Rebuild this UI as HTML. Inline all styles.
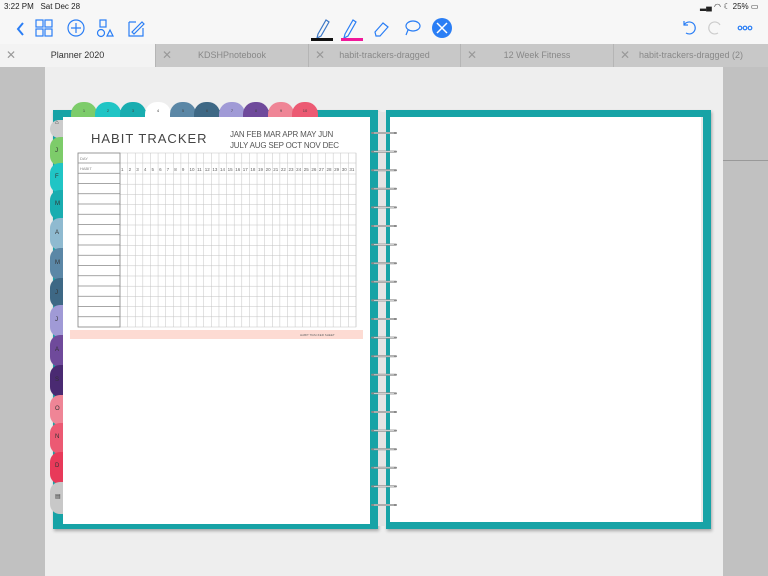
<!DOCTYPE html><html><head><style>
*{margin:0;padding:0;box-sizing:border-box}
body{width:768px;height:576px;overflow:hidden;background:#c1c1c1;font-family:"Liberation Sans",sans-serif;position:relative}
.a{position:absolute}
.tab{position:absolute;top:44px;height:23px;font-size:9px;color:#888;text-align:center;line-height:23px;border-left:1px solid #b5b5b5;background:#c8c8c8}
.tab span.x{position:absolute;left:6px;top:0;font-size:12px;color:#999}
.tt{position:absolute;top:102px;width:26px;height:20px;border-radius:12px 12px 0 0;font-size:4px;color:#444;text-align:center;padding-top:6px}
.st{position:absolute;left:50px;width:20px;border-radius:10px 0 0 10px;font-size:6px;color:#333;padding-left:5px}
</style></head><body>
<div class="a" style="left:0;top:0;width:768px;height:44px;background:#f7f7f7"></div>
<div class="a" style="left:4px;top:2px;font-size:8px;color:#222">3:22 PM&nbsp;&nbsp; Sat Dec 28</div>
<div class="a" style="left:700px;top:2px;font-size:8px;color:#222">▂▄ ◠ ☾ 25% ▭</div>
<svg class="a" style="left:0;top:12px" width="768" height="32" fill="none" stroke="#2a7ef5" stroke-width="1.2">
<path d="M23 11l-5 6 5 6" stroke-width="2"/>
<rect x="36" y="8" width="7" height="7"/><rect x="45" y="8" width="7" height="7"/><rect x="36" y="17" width="7" height="7"/><rect x="45" y="17" width="7" height="7"/>
<circle cx="76" cy="16" r="8"/><path d="M76 11v10M71 16h10"/>
<rect x="100" y="8" width="6" height="7"/><circle cx="101" cy="21" r="3.5"/><path d="M107 24l3-6 3 6z"/>
<path d="M129 10h7M129 10v14h14v-8M132 20l10-10 2 2-10 10z"/>
<path d="M318 22l8-14 3 2-8 14-4 2z" stroke="#3d78c6"/><rect x="311" y="26" width="22" height="3" fill="#111" stroke="none"/>
<path d="M345 22l8-14 3 2-8 14-4 2z"/><rect x="341" y="26" width="22" height="3" fill="#f0189a" stroke="none"/>
<path d="M375 20l8-9 5 4-8 9h-4z"/>
<ellipse cx="413" cy="14" rx="7" ry="5"/><path d="M408 18l-2 5"/>
<circle cx="442" cy="16" r="10" fill="#2a7ef5" stroke="none"/><path d="M437 11l10 10M447 11l-10 10" stroke="#fff" stroke-width="1.5"/>
<path d="M684 13a6 6 0 1 1 2 8M684 9v4h4"/>
<path d="M720 13a6 6 0 1 0 -2 8" stroke="#ccc"/>
<circle cx="740" cy="16" r="1.8"/><circle cx="745" cy="16" r="1.8"/><circle cx="750" cy="16" r="1.8"/>
</svg>
<div class="tab" style="left:0;width:155px;background:#f3f3f3;color:#333;border:none"><span class="x">✕</span>Planner 2020</div>
<div class="tab" style="left:155px;width:153px"><span class="x">✕</span>KDSHPnotebook</div>
<div class="tab" style="left:308px;width:152px"><span class="x">✕</span>habit-trackers-dragged</div>
<div class="tab" style="left:460px;width:153px"><span class="x">✕</span>12 Week Fitness</div>
<div class="tab" style="left:613px;width:155px"><span class="x">✕</span>habit-trackers-dragged (2)</div>
<div class="a" style="left:45px;top:67px;width:678px;height:509px;background:#eeeeee"></div>
<div class="a" style="left:723px;top:160px;width:45px;height:1px;background:#999"></div>
<!-- left notebook -->
<div class="a" style="left:53px;top:110px;width:325px;height:419px;background:#17a3a6;box-shadow:1px 2px 3px rgba(0,0,0,.3)"></div>
<div class="tt" style="left:71px;background:#7dcc6a">1</div>
<div class="tt" style="left:95px;background:#20c5c5">2</div>
<div class="tt" style="left:120px;background:#19adb0">3</div>
<div class="tt" style="left:145px;background:#fff">4</div>
<div class="tt" style="left:170px;background:#5b87a6">5</div>
<div class="tt" style="left:194px;background:#3e6885">6</div>
<div class="tt" style="left:219px;background:#a09ad6">7</div>
<div class="tt" style="left:243px;background:#6f4a9b">8</div>
<div class="tt" style="left:268px;background:#ef8596">9</div>
<div class="tt" style="left:292px;background:#ec5a73">10</div>
<div class="st" style="top:120px;height:18px;background:#ccc">⌂</div>
<div class="st" style="top:137px;height:29px;background:#7dcc6a;padding-top:11px">J</div>
<div class="st" style="top:163px;height:30px;background:#20c5c5;padding-top:11px">F</div>
<div class="st" style="top:190px;height:30px;background:#19adb0;padding-top:11px">M</div>
<div class="st" style="top:218px;height:32px;background:#8fbad0;padding-top:12px">A</div>
<div class="st" style="top:248px;height:32px;background:#5b87a6;padding-top:12px">M</div>
<div class="st" style="top:278px;height:30px;background:#3e6885;padding-top:12px">J</div>
<div class="st" style="top:305px;height:32px;background:#a09ad6;padding-top:12px">J</div>
<div class="st" style="top:335px;height:32px;background:#6f4a9b;padding-top:12px">A</div>
<div class="st" style="top:365px;height:32px;background:#4a2a72;padding-top:12px">S</div>
<div class="st" style="top:395px;height:30px;background:#ef8596;padding-top:11px">O</div>
<div class="st" style="top:423px;height:31px;background:#ec5a73;padding-top:11px">N</div>
<div class="st" style="top:452px;height:32px;background:#e83a5a;padding-top:11px">D</div>
<div class="st" style="top:482px;height:32px;background:#c8c8c8;padding-top:11px">▤</div>
<div class="a" style="left:63px;top:117px;width:307px;height:407px;background:#fff"></div>
<div class="a" style="left:91px;top:131px;font-size:13px;letter-spacing:1px;color:#444;white-space:nowrap">HABIT TRACKER</div>
<div class="a" style="left:230px;top:129px;font-size:8px;color:#555;line-height:11px;white-space:nowrap;letter-spacing:-0.2px">JAN FEB MAR APR MAY JUN<br>JULY AUG SEP OCT NOV DEC</div>
<svg class="a" style="left:0;top:0" width="768" height="576">
<g id="grid"></g>
</svg>
<div class="a" style="left:70px;top:330px;width:293px;height:9px;background:#fddbd3"></div>
<div class="a" style="left:300px;top:333px;font-size:3px;color:#666">HABIT TRACKER SHEET</div>
<!-- right notebook -->
<div class="a" style="left:386px;top:110px;width:325px;height:419px;background:#17a3a6;box-shadow:1px 2px 3px rgba(0,0,0,.3)"></div>
<div class="a" style="left:390px;top:117px;width:313px;height:405px;background:#fff;border-right:2px solid #e8e8e8"></div>
<svg class="a" style="left:0;top:0" width="768" height="576" id="ov"></svg>
<script>
var g=document.getElementById('grid');
var h='<g stroke="#c4c4c4" stroke-width="0.5" fill="none"><rect x="78" y="153" width="278" height="174"/><path d="M120 163H356"/>';
for(var i=0;i<=31;i++){var x=120+i*236/31;h+='<path d="M'+x+' 153V327"/>';}
for(var j=0;j<=14;j++){var y=174+j*153/15;h+='<path d="M120 '+y+'H356"/>';}
h+='</g><g stroke="#888" stroke-width="0.8" fill="none"><rect x="78" y="153" width="42" height="174"/>';
for(var j=0;j<16;j++){var y=163+j*(164/16);h+='<path d="M78 '+y+'H120"/>';}
h+='</g><text x="80" y="160" font-size="4" fill="#888">DAY</text><text x="80" y="170" font-size="4" fill="#888">HABIT</text>';
for(var i=0;i<31;i++){h+='<text x="'+(121+i*236/31)+'" y="171" font-size="4.5" fill="#666">'+(i+1)+'</text>';}
g.innerHTML=h;
var o='<rect x="378" y="112" width="8" height="414" fill="#e4e4e4"/>';
for(var k=0;k<21;k++){var y=133+k*18.6;o+='<path d="M372 '+y+'H396" stroke="#8a8a8a" stroke-width="2" stroke-linecap="round"/><path d="M374 '+y+'H394" stroke="#e5e5e5" stroke-width="0.7"/>';}
document.getElementById('ov').innerHTML=o;
</script>
</body></html>
